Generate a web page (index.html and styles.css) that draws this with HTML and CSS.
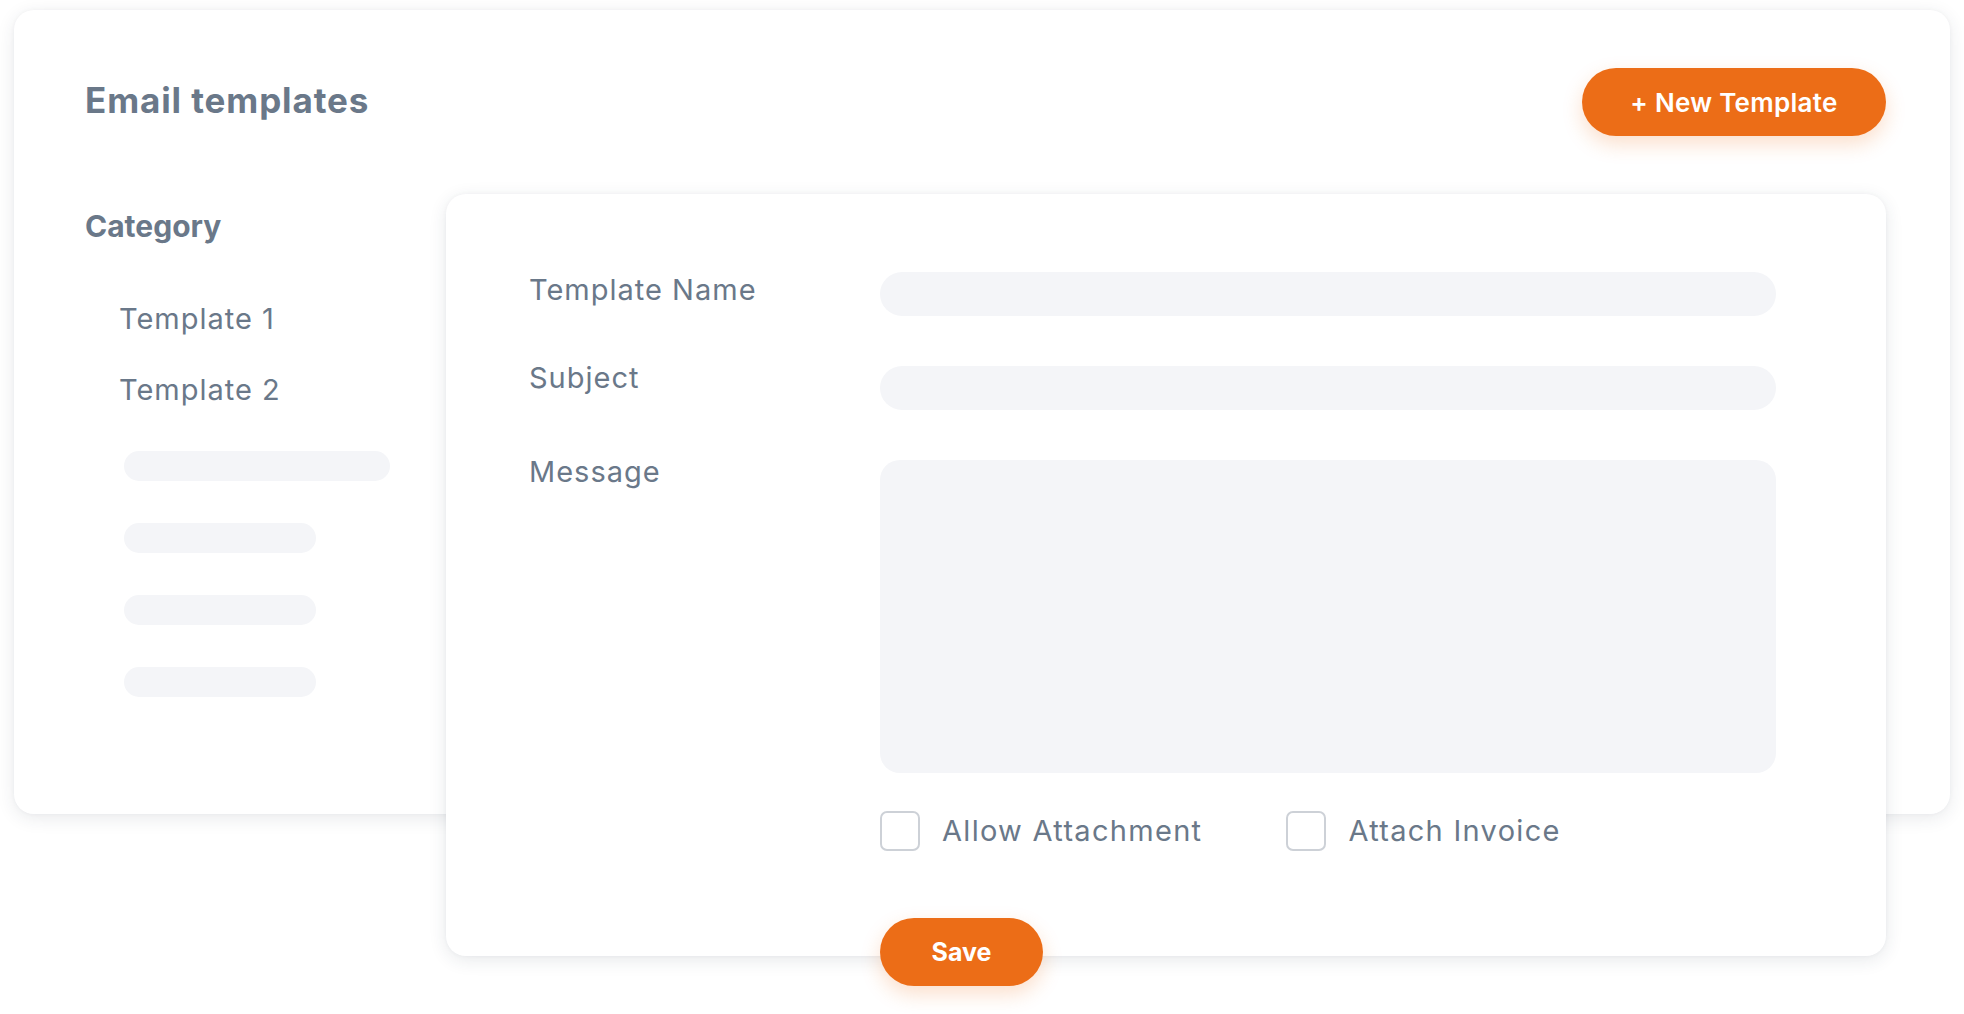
FILE: index.html
```html
<!DOCTYPE html>
<html lang="en">
<head>
<meta charset="utf-8">
<title>Email templates</title>
<link rel="stylesheet" href="styles.css">
</head>
<body>
  <section class="panel">
    <header class="panel-head">
      <h1 class="title">Email templates</h1>
      <button class="btn btn-new" type="button">+ New Template</button>
    </header>
    <div class="panel-body">
      <aside class="sidebar">
        <h2 class="cat-title">Category</h2>
        <ul class="tpl-list">
          <li class="tpl-item">Template 1</li>
          <li class="tpl-item">Template 2</li>
        </ul>
        <div class="skeletons">
          <span class="sk sk-wide"></span>
          <span class="sk"></span>
          <span class="sk"></span>
          <span class="sk"></span>
        </div>
      </aside>
      <form class="editor">
        <div class="fields">
          <label class="field-label field-label-first">Template Name</label>
          <div class="input"></div>
          <label class="field-label">Subject</label>
          <div class="input"></div>
          <label class="field-label">Message</label>
          <div class="textarea"></div>
        </div>
        <div class="checks">
          <label class="check"><span class="box"></span><span class="check-text">Allow Attachment</span></label>
          <label class="check"><span class="box"></span><span class="check-text">Attach Invoice</span></label>
        </div>
        <button class="btn btn-save" type="button">Save</button>
      </form>
    </div>
  </section>
</body>
</html>
```

FILE: styles.css
```css
* { box-sizing: border-box; }

html, body {
  margin: 0;
  padding: 0;
  background: #ffffff;
}

body {
  font-family: "Inter", "Noto Sans", sans-serif;
  color: #6a7889;
  width: 1964px;
  height: 1014px;
  overflow: hidden;
}

.panel {
  margin: 10px 0 0 14px;
  width: 1936px;
  height: 804px;
  padding: 58px 64px 0 71px;
  background: #ffffff;
  border-radius: 20px;
  box-shadow: 0 4px 18px rgba(40, 52, 72, 0.10), 0 0 4px rgba(40, 52, 72, 0.04);
}

.panel-head {
  display: flex;
  align-items: center;
  justify-content: space-between;
  height: 68px;
}

.title {
  margin: 0;
  font-size: 35px;
  font-weight: 700;
  line-height: 1;
  letter-spacing: 0.9px;
  color: #6a7889;
  padding-bottom: 4px;
}

.btn {
  border: none;
  font-family: inherit;
  color: #ffffff;
  background: #ec6d17;
  border-radius: 40px;
  cursor: pointer;
  flex: none;
}

.btn-new {
  width: 304px;
  height: 68px;
  font-size: 26px;
  font-weight: 600;
  letter-spacing: 0.3px;
  box-shadow: 0 8px 20px rgba(236, 109, 23, 0.22);
}

.panel-body {
  display: flex;
  margin-top: 58px;
}

.sidebar {
  width: 361px;
  flex: none;
  padding-top: 14px;
}

.cat-title {
  margin: 0;
  font-size: 30px;
  font-weight: 700;
  line-height: 36px;
  color: #6a7889;
}

.tpl-list {
  list-style: none;
  margin: 57px 0 0 0;
  padding: 0 0 0 34px;
  display: flex;
  flex-direction: column;
  gap: 34.5px;
}

.tpl-item {
  font-size: 29px;
  line-height: 36px;
  font-weight: 400;
  letter-spacing: 1px;
}

.skeletons {
  display: flex;
  flex-direction: column;
  align-items: flex-start;
  gap: 42.5px;
  margin-top: 43.5px;
  padding-left: 39px;
}

.sk {
  display: block;
  width: 192px;
  height: 29.5px;
  border-radius: 15px;
  background: #f4f5f8;
}

.sk-wide { width: 266px; }

.editor {
  width: 1440px;
  height: 762px;
  flex: none;
  padding: 78px 110px 0 83px;
  background: #ffffff;
  border-radius: 20px;
  box-shadow: 0 4px 18px rgba(40, 52, 72, 0.11), 0 0 4px rgba(40, 52, 72, 0.04);
  display: flex;
  flex-direction: column;
  align-items: flex-start;
}

.fields {
  display: grid;
  grid-template-columns: 351px 896px;
  row-gap: 50px;
  width: 100%;
  flex: none;
}

.field-label {
  font-size: 29px;
  line-height: 36px;
  font-weight: 400;
  letter-spacing: 1px;
  margin-top: -6.5px;
}

.field-label-first {
  margin-top: -0.5px;
}

.input {
  height: 44px;
  border-radius: 22px;
  background: #f4f5f8;
}

.textarea {
  height: 313px;
  border-radius: 20px;
  background: #f4f5f8;
}

.checks {
  display: flex;
  gap: 84px;
  margin-top: 38px;
  margin-left: 351px;
  flex: none;
}

.check {
  display: flex;
  align-items: center;
  gap: 22px;
}

.box {
  width: 40px;
  height: 40px;
  border: 2px solid #cdd1d7;
  border-radius: 7px;
  background: #ffffff;
  flex: none;
}

.check-text {
  font-size: 29px;
  line-height: 36px;
  letter-spacing: 1.3px;
}

.btn-save {
  margin-top: 67px;
  margin-left: 351px;
  width: 163px;
  height: 68px;
  font-size: 25px;
  font-weight: 700;
  box-shadow: 0 8px 20px rgba(236, 109, 23, 0.22);
}
```
